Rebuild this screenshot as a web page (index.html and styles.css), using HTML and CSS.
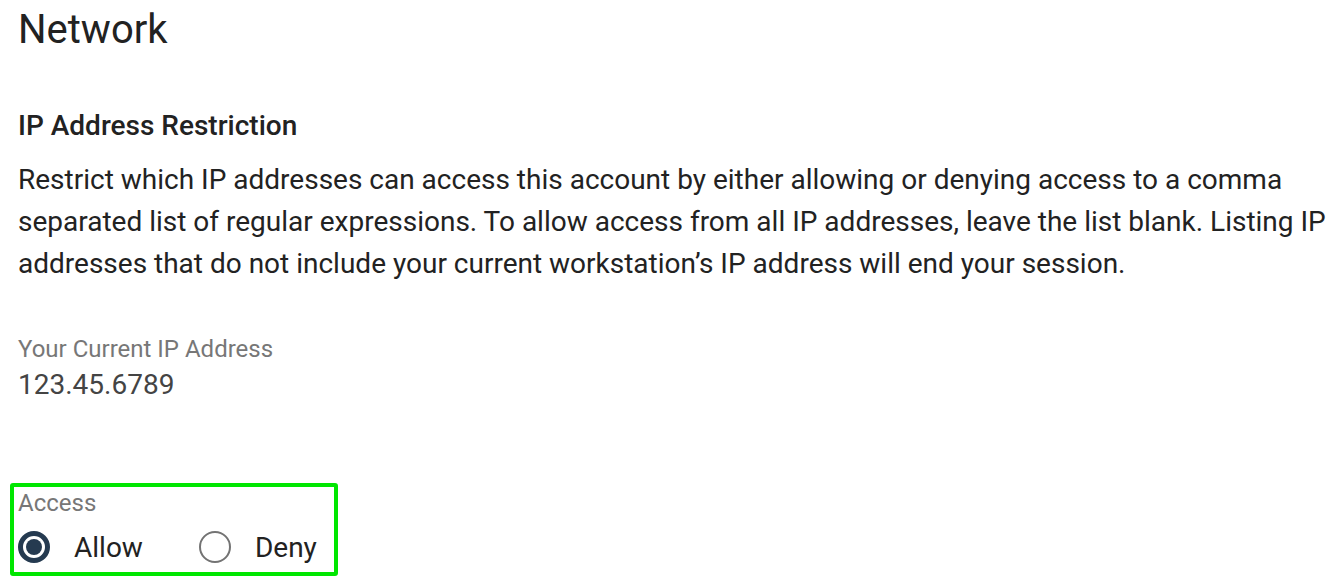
FILE: index.html
```html
<!DOCTYPE html>
<html lang="en">
<head>
  <meta charset="UTF-8">
  <meta name="viewport" content="width=device-width, initial-scale=1.0">
  <title>Network</title>
  <link rel="stylesheet" href="styles.css">
</head>
<body>

<main class="page">
  <h1 class="page-title">Network</h1>

  <section class="restriction">
    <h2>IP Address Restriction</h2>
    <p class="desc">Restrict which IP addresses can access this account by either allowing or denying access to a comma separated list of regular expressions. To allow access from all IP addresses, leave the list blank. Listing IP addresses that do not include your current workstation’s IP address will end your session.</p>

    <div class="current-ip">
      <div class="field-label">Your Current IP Address</div>
      <div class="ip-value">123.45.6789</div>
    </div>

    <div class="access-box">
      <div class="field-label">Access</div>
      <div class="radio-row">
        <label class="radio">
          <input type="radio" name="access" checked>
          <span class="dot"></span>
          <span class="radio-text">Allow</span>
        </label>
        <label class="radio">
          <input type="radio" name="access">
          <span class="dot"></span>
          <span class="radio-text">Deny</span>
        </label>
      </div>
    </div>
  </section>
</main>

</body>
</html>
```

FILE: styles.css
```css
body {
  font-family: Roboto, 'Noto Sans', sans-serif;
  margin: 0;
  padding: 0;
  background-color: #ffffff;
  color: #222222;
}
.page {
  padding: 6px 2px 0 18px;
}
.page-title {
  margin: 0;
  font-size: 40px;
  font-weight: 400;
  line-height: 48px;
  color: #222;
}
.restriction h2 {
  margin: 56px 0 0;
  font-size: 28px;
  font-weight: 500;
  line-height: 32px;
  color: #222;
}
.desc {
  margin: 17px 0 0;
  font-size: 28px;
  line-height: 42px;
  color: #222;
}
.current-ip {
  margin-top: 49px;
}
.field-label {
  font-size: 24px;
  line-height: 30px;
  color: #777;
}
.ip-value {
  font-size: 28px;
  line-height: 42px;
  color: #444;
}
.access-box {
  display: inline-block;
  margin: 77px 0 0 -8px;
  padding: 1px 17px 0 4px;
  border: 4px solid #00e600;
  border-radius: 3px;
}
.radio-row {
  display: flex;
  align-items: center;
  gap: 56px;
  height: 50px;
  margin-top: 4px;
}
.radio {
  display: flex;
  align-items: center;
  gap: 24px;
  cursor: pointer;
}
.radio input {
  display: none;
}
.dot {
  width: 32px;
  height: 32px;
  box-sizing: border-box;
  border: 2.5px solid #737373;
  border-radius: 50%;
  position: relative;
}
.radio input:checked + .dot {
  border: 5px solid #253a50;
}
.radio input:checked + .dot::after {
  content: "";
  position: absolute;
  top: 3px;
  left: 3px;
  width: 16px;
  height: 16px;
  border-radius: 50%;
  background: #253a50;
}
.radio-text {
  font-size: 28px;
  color: #222;
}
```
